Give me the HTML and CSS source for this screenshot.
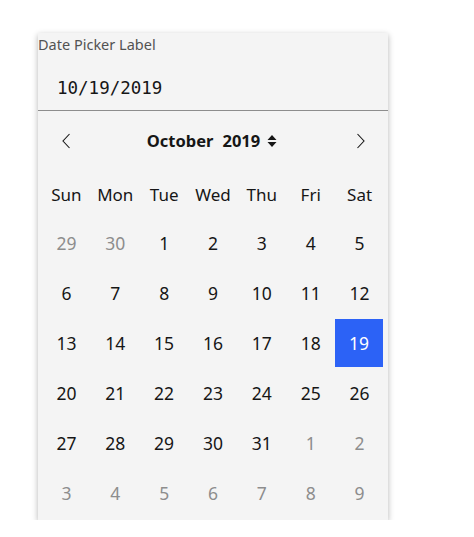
FILE: index.html
```html
<!DOCTYPE html>
<html>
<head>
<meta charset="utf-8">
<link rel="stylesheet" href="styles.css">
</head>
<body>
<div class="picker">
  <div class="label">Date Picker Label</div>
  <div class="field"><span class="value">10/19/2019</span></div>
  <div class="calendar">
    <div class="header">
      <span class="nav">
        <svg width="16" height="16" viewBox="0 0 16 16"><path d="M10.5 1 L4 8 L10.5 15" fill="none" stroke="#161616" stroke-width="1.1"/></svg>
      </span>
      <span class="month"><span class="m">October</span><span class="y">2019</span>
        <svg class="caret" width="10" height="14" viewBox="0 0 10 14"><path d="M5 1 L9.5 6 L0.5 6 Z M5 13 L9.5 8 L0.5 8 Z" fill="#161616"/></svg>
      </span>
      <span class="nav">
        <svg width="16" height="16" viewBox="0 0 16 16"><path d="M5.5 1 L12 8 L5.5 15" fill="none" stroke="#161616" stroke-width="1.1"/></svg>
      </span>
    </div>
    <div class="grid weekdays">
      <span>Sun</span><span>Mon</span><span>Tue</span><span>Wed</span><span>Thu</span><span>Fri</span><span>Sat</span>
    </div>
    <div class="grid days">
      <span class="other">29</span><span class="other">30</span><span>1</span><span>2</span><span>3</span><span>4</span><span>5</span>
      <span>6</span><span>7</span><span>8</span><span>9</span><span>10</span><span>11</span><span>12</span>
      <span>13</span><span>14</span><span>15</span><span>16</span><span>17</span><span>18</span><span class="selected">19</span>
      <span>20</span><span>21</span><span>22</span><span>23</span><span>24</span><span>25</span><span>26</span>
      <span>27</span><span>28</span><span>29</span><span>30</span><span>31</span><span class="other">1</span><span class="other">2</span>
      <span class="other">3</span><span class="other">4</span><span class="other">5</span><span class="other">6</span><span class="other">7</span><span class="other">8</span><span class="other">9</span>
    </div>
  </div>
</div>
</body>
</html>
```

FILE: styles.css
```css
html, body {
  margin: 0;
  padding: 0;
  background: #ffffff;
}
body {
  font-family: "Noto Sans", "Open Sans", sans-serif;
  color: #161616;
}
.picker {
  margin: 33px 0 0 38px;
  width: 350px;
  background: #f4f4f4;
  box-shadow: 0 2px 6px rgba(0, 0, 0, 0.3);
}
.label {
  height: 21px;
  padding-top: 2px;
  box-sizing: border-box;
  font-size: 14.5px;
  line-height: 19px;
  color: #525252;
}
.field {
  height: 57px;
  box-sizing: border-box;
  border-bottom: 1px solid #8d8d8d;
  display: flex;
  align-items: center;
  padding: 12px 0 0 19px;
}
.value {
  font-family: "DejaVu Sans Mono", "Liberation Mono", monospace;
  font-size: 17.5px;
  color: #161616;
}
.calendar {
  padding: 0 4px 2px;
}
.header {
  height: 59px;
  display: flex;
  align-items: center;
  justify-content: space-between;
}
.nav {
  width: 49px;
  height: 49px;
  display: flex;
  align-items: center;
  justify-content: center;
}
.month {
  display: flex;
  align-items: center;
  font-weight: 700;
  font-size: 16.5px;
  margin-left: -2px;
}
.month .y {
  margin-left: 9px;
}
.caret {
  margin-left: 7px;
}
.grid {
  display: grid;
  grid-template-columns: repeat(7, 1fr);
}
.grid span {
  display: flex;
  align-items: center;
  justify-content: center;
}
.weekdays {
  height: 48px;
  font-size: 17px;
}
.days {
  grid-auto-rows: 50px;
  font-size: 17.5px;
}
.days .other {
  color: #8d8d8d;
}
.days .selected {
  background: #2c62f6;
  color: #ffffff;
  margin: 1px 1px 1px 0;
}
```
